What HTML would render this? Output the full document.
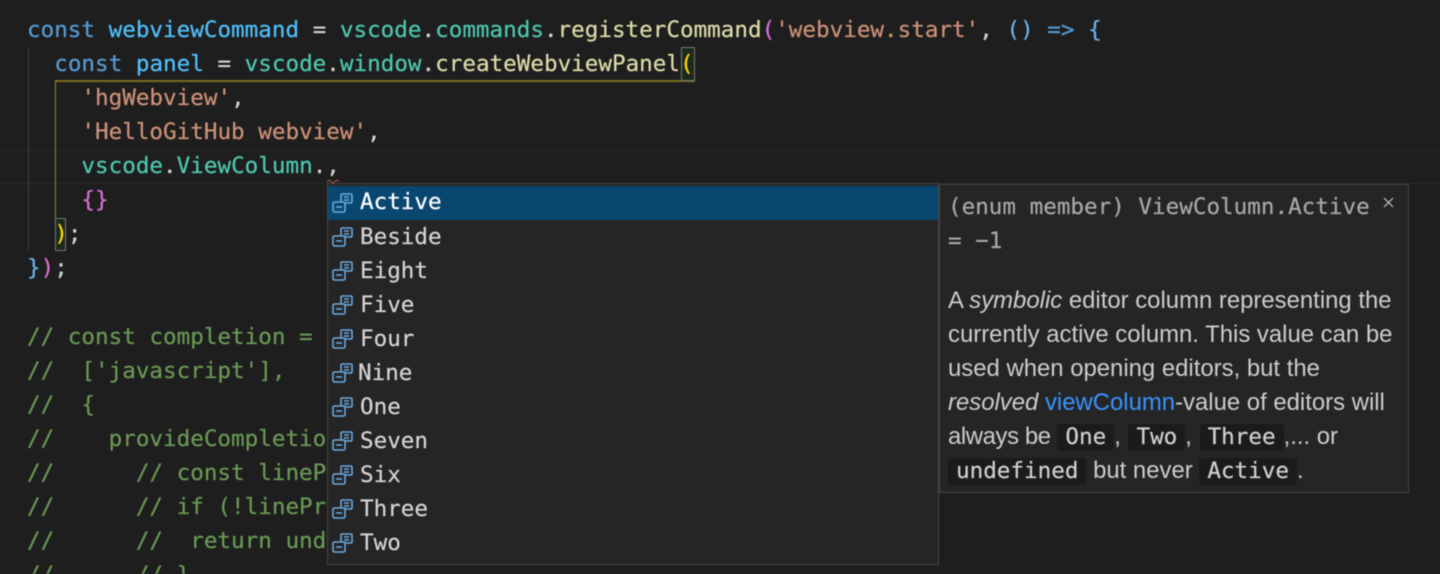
<!DOCTYPE html>
<html>
<head>
<meta charset="utf-8">
<style>
html,body{margin:0;padding:0;background:#1e1e1e}
#root{position:relative;width:1440px;height:574px;overflow:hidden;background:#1e1e1e;filter:blur(.45px)}
.l{position:absolute;left:27px;height:34px;font:22.6px/34px "DejaVu Sans Mono","Liberation Mono",monospace;white-space:pre;color:#d4d4d4;-webkit-text-stroke:.2px}
.b{position:absolute}
.k{color:#569cd6}.v{color:#4fc1ff}.t{color:#4ec9b0}.f{color:#dcdcaa}.s{color:#ce9178}.p{color:#da70d6}.y{color:#ffd700}.a{color:#68b2ee}.c{color:#6a9955}.bl{color:#68b2ee}
#sug{position:absolute;left:327px;top:183px;width:610px;height:380px;background:#252526;border:1px solid #454545}
#act{position:absolute;left:0;top:2px;width:610px;height:34px;background:#094771}
.r{position:absolute;left:32px;font:22.6px/34px "DejaVu Sans Mono","Liberation Mono",monospace;color:#d4d4d4;white-space:pre;-webkit-text-stroke:.2px}
.ic{position:absolute;left:4px;width:21px;height:20px}
#doc{position:absolute;left:939px;top:184px;width:468px;height:307px;background:#252526;border:1px solid #454545}
.d{position:absolute;left:8px;font:22.6px/34px "DejaVu Sans Mono","Liberation Mono",monospace;color:#a8a8a8;white-space:pre;-webkit-text-stroke:.2px}
.m{position:absolute;left:8px;font:23.9px/34px "Liberation Sans",sans-serif;color:#cccccc;white-space:pre}
.m code{font:22.6px/27px "DejaVu Sans Mono","Liberation Mono",monospace;background:#1b1b1b;border-radius:4px;padding:0 8px;display:inline-block;color:#d0d0d0;vertical-align:baseline;-webkit-text-stroke:.2px}
.m i{font-style:italic}
.m .lnk{color:#3794ff}
</style>
</head>
<body>
<div id="root">
<!-- current line -->
<div class="b" style="left:0;top:150px;width:1440px;height:1px;background:#2a2a2a"></div>
<div class="b" style="left:0;top:183px;width:1440px;height:1px;background:#2a2a2a"></div>
<!-- indent guide -->
<div class="b" style="left:28px;top:47px;width:1px;height:204px;background:#404040"></div>
<!-- bracket guides -->
<div class="b" style="left:55px;top:80px;width:640px;height:1.5px;background:#7d6e1e"></div>
<div class="b" style="left:54.5px;top:80px;width:1.5px;height:139px;background:#9a8a25"></div>
<div class="b" style="left:55px;top:218px;width:11px;height:33px;box-sizing:border-box;background:#1c2a1c;border:1px solid #777"></div>
<div class="b" style="left:681px;top:47px;width:14px;height:34px;box-sizing:border-box;background:#1c2a1c;border:1px solid #777"></div>

<div class="l" style="top:13px"><span class="k">const</span> <span class="v">webviewCommand</span> = <span class="t">vscode</span>.<span class="t">commands</span>.<span class="f">registerCommand</span><span class="p">(</span><span class="s">'webview.start'</span>, <span class="a">()</span> <span class="k">=&gt;</span> <span class="bl">{</span></div>
<div class="l" style="top:47px">  <span class="k">const</span> <span class="v">panel</span> = <span class="t">vscode</span>.<span class="t">window</span>.<span class="f">createWebviewPanel</span><span class="y">(</span></div>
<div class="l" style="top:81px">    <span class="s">'hgWebview'</span>,</div>
<div class="l" style="top:115px">    <span class="s">'HelloGitHub webview'</span>,</div>
<div class="l" style="top:149px">    <span class="t">vscode</span>.<span class="t">ViewColumn</span>.,</div>
<div class="l" style="top:183px">    <span class="p">{}</span></div>
<div class="l" style="top:217px">  <span class="y">)</span>;</div>
<div class="l" style="top:251px"><span class="bl">}</span><span class="p">)</span>;</div>
<div class="l c" style="top:320px">// const completion =</div>
<div class="l c" style="top:354px">//  ['javascript'],</div>
<div class="l c" style="top:388px">//  {</div>
<div class="l c" style="top:422px">//    provideCompletionItems</div>
<div class="l c" style="top:456px">//      // const linePrefix</div>
<div class="l c" style="top:490px">//      // if (!linePrefix</div>
<div class="l c" style="top:524px">//      //  return undefined</div>
<div class="l c" style="top:558px">//      // }</div>

<!-- squiggle -->
<svg class="b" style="left:326px;top:179px;z-index:2" width="16" height="5" viewBox="0 0 16 5"><path d="M1 3 Q3 0 5 2.5 T9 2.5 T13 2.5" fill="none" stroke="#b5564c" stroke-width="1"/></svg>

<svg width="0" height="0" style="position:absolute"><defs>
<g id="en" fill="none" stroke="#6aa9de" stroke-width="1.6">
<path d="M9 9V2.2q0-1.2 1.2-1.2h8.6q1.2 0 1.2 1.2v6.6q0 1.2-1.2 1.2H13"/>
<path d="M12 4h5M12 7h5" stroke-width="1.4"/>
<rect x="1" y="9" width="12" height="10" rx="1.6"/>
<path d="M4 14h6" stroke-width="1.6"/>
</g>
</defs></svg>

<div id="sug">
<div id="act"></div>
<svg class="ic" style="top:9px" viewBox="0 0 21 20"><use href="#en"/></svg><div class="r" style="top:1px;color:#fff">Active</div>
<svg class="ic" style="top:43px" viewBox="0 0 21 20"><use href="#en"/></svg><div class="r" style="top:36px">Beside</div>
<svg class="ic" style="top:77px" viewBox="0 0 21 20"><use href="#en"/></svg><div class="r" style="top:70px">Eight</div>
<svg class="ic" style="top:111px" viewBox="0 0 21 20"><use href="#en"/></svg><div class="r" style="top:104px">Five</div>
<svg class="ic" style="top:145px" viewBox="0 0 21 20"><use href="#en"/></svg><div class="r" style="top:138px">Four</div>
<svg class="ic" style="top:179px" viewBox="0 0 21 20"><use href="#en"/></svg><div class="r" style="top:172px;left:30px">Nine</div>
<svg class="ic" style="top:213px" viewBox="0 0 21 20"><use href="#en"/></svg><div class="r" style="top:206px">One</div>
<svg class="ic" style="top:247px" viewBox="0 0 21 20"><use href="#en"/></svg><div class="r" style="top:240px">Seven</div>
<svg class="ic" style="top:281px" viewBox="0 0 21 20"><use href="#en"/></svg><div class="r" style="top:274px">Six</div>
<svg class="ic" style="top:315px" viewBox="0 0 21 20"><use href="#en"/></svg><div class="r" style="top:308px">Three</div>
<svg class="ic" style="top:349px" viewBox="0 0 21 20"><use href="#en"/></svg><div class="r" style="top:342px">Two</div>
</div>

<div id="doc">
<div class="d" style="top:5px">(enum member) ViewColumn.Active</div>
<div class="d" style="top:39px">= −1</div>
<svg class="b" style="left:442px;top:11px" width="13" height="13" viewBox="0 0 13 13"><path d="M2 2L11 11M11 2L2 11" stroke="#c5c5c5" stroke-width="1.2" fill="none"/></svg>
<div class="m" style="top:99px">A <i>symbolic</i> editor column representing the</div>
<div class="m" style="top:133px">currently active column. This value can be</div>
<div class="m" style="top:167px">used when opening editors, but the</div>
<div class="m" style="top:201px"><i>resolved</i> <span class="lnk">viewColumn</span>-value of editors will</div>
<div class="m" style="top:235px"><span style="letter-spacing:-.4px;margin-right:.5px">always be </span><code>One</code>, <code style="margin-left:1px">Two</code>, <code style="margin-left:1px">Three</code>,... or</div>
<div class="m" style="top:269px"><code>undefined</code> but never <code>Active</code>.</div>
</div>
</div>
</body>
</html>
